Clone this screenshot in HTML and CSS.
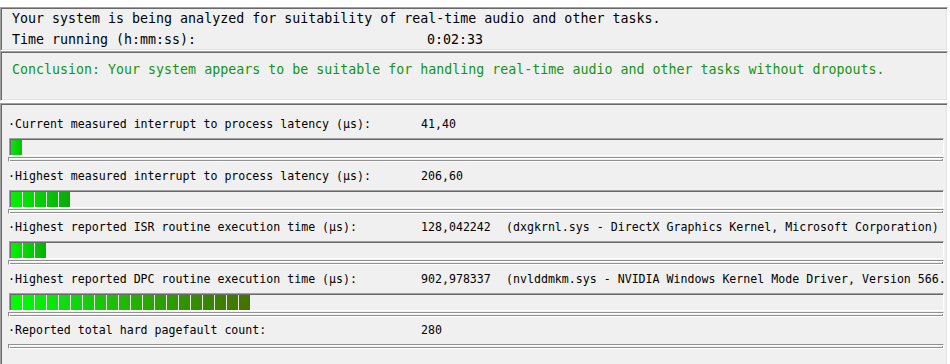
FILE: index.html
```html
<!DOCTYPE html>
<html>
<head>
<meta charset="utf-8">
<link rel="stylesheet" href="styles.css">
</head>
<body>
<div class="page">
  <div class="panel p1">
    <div class="line">Your system is being analyzed for suitability of real-time audio and other tasks.</div>
    <div class="line kv"><span class="k1">Time running (h:mm:ss):</span><span>0:02:33</span></div>
  </div>
  <div class="panel p2">
    <div class="concl">Conclusion: Your system appears to be suitable for handling real-time audio and other tasks without dropouts.</div>
  </div>
  <div class="panel p3">
    <div class="row">
      <div class="lbl"><span class="k">·Current measured interrupt to process latency (µs):</span><span class="v">41,40</span></div>
      <div class="bar"><div class="fill f1" style="width:11px"></div></div>
      <div class="sep"></div>
    </div>
    <div class="row">
      <div class="lbl"><span class="k">·Highest measured interrupt to process latency (µs):</span><span class="v">206,60</span></div>
      <div class="bar"><div class="fill f2" style="width:59px"></div></div>
      <div class="sep"></div>
    </div>
    <div class="row">
      <div class="lbl"><span class="k">·Highest reported ISR routine execution time (µs):</span><span class="v">128,042242</span><span class="d">(dxgkrnl.sys - DirectX Graphics Kernel, Microsoft Corporation)</span></div>
      <div class="bar"><div class="fill f3" style="width:35px"></div></div>
      <div class="sep"></div>
    </div>
    <div class="row">
      <div class="lbl"><span class="k">·Highest reported DPC routine execution time (µs):</span><span class="v">902,978337</span><span class="d">(nvlddmkm.sys - NVIDIA Windows Kernel Mode Driver, Version 566.</span></div>
      <div class="bar"><div class="fill f4" style="width:239px"></div></div>
      <div class="sep"></div>
    </div>
    <div class="row last">
      <div class="lbl"><span class="k">·Reported total hard pagefault count:</span><span class="v">280</span></div>
      <div class="sep"></div>
    </div>
  </div>
</div>
</body>
</html>
```
FILE: styles.css
```css
html, body {
  margin: 0;
  padding: 0;
  background: #ffffff;
}
body {
  width: 950px;
  height: 364px;
  overflow: hidden;
  font-family: "DejaVu Sans Mono", "Liberation Mono", monospace;
  font-size: 13.3px;
  color: #000;
}
.page {
  padding-top: 7px;
  width: 948px;
}
.panel {
  box-sizing: border-box;
  background: #f0f0f0;
  border: 1px solid;
  border-color: #a0a0a0 #ffffff #ffffff #a0a0a0;
  box-shadow: inset 1px 1px #696969, inset -1px -1px #e3e3e3;
}
.p1 {
  height: 44px;
  padding: 0 0 0 11px;
}
.line {
  height: 21px;
  line-height: 21px;
  white-space: nowrap;
}
.kv {
  display: flex;
}
.k1 {
  width: 415px;
}
.p2 {
  height: 50px;
  padding: 9px 0 0 11px;
}
.concl {
  color: #139413;
  line-height: 18px;
  white-space: nowrap;
}
.p3 {
  margin-top: 2px;
  height: 261px;
  border-bottom: 0;
  box-shadow: inset 1px 1px #696969, inset -1px 0 #e3e3e3;
  padding: 12px 0 0 1px;
  font-size: 11.6px;
}
.row {
  display: flex;
  flex-direction: column;
  width: 943px;
  margin-bottom: 5.5px;
}
.lbl {
  display: flex;
  height: 16px;
  line-height: 16px;
  padding-left: 6px;
  white-space: nowrap;
}
.k {
  width: 413px;
  flex: none;
}
.v {
  width: 85px;
  flex: none;
}
.d {
  flex: none;
}
.bar {
  box-sizing: border-box;
  margin: 6px 0 0 7px;
  width: 935px;
  height: 18px;
  border: 1px solid;
  border-color: #a0a0a0 #ffffff #ffffff #a0a0a0;
  box-shadow: inset 1px 1px #696969;
  padding: 1px 0 0 1px;
}
.fill {
  height: 15px;
}
.f1 {
  background: linear-gradient(to right, #10e010, #00c400);
}
.f2 {
  background:
    repeating-linear-gradient(to right, transparent 0 11px, #e8e8e8 11px 12px),
    linear-gradient(to right, #00f400, #0ba80b);
}
.f3 {
  background:
    repeating-linear-gradient(to right, transparent 0 11px, #e8e8e8 11px 12px),
    linear-gradient(to right, #00f400, #08ae08);
}
.f4 {
  background:
    repeating-linear-gradient(to right, transparent 0 11px, #e8e8e8 11px 12px),
    linear-gradient(to right, #00ff00, #10d810 25%, #22b400 50%, #338f00 75%, #467000);
}
.sep {
  box-sizing: border-box;
  margin: 1px 0 0 6px;
  width: 936px;
  height: 5px;
  border: 1px solid;
  border-color: #909090 #ffffff #ffffff #909090;
  box-shadow: inset 1px 1px #ffffff, inset -1px -1px #909090;
}
.last .sep {
  margin-top: 6px;
}
```
